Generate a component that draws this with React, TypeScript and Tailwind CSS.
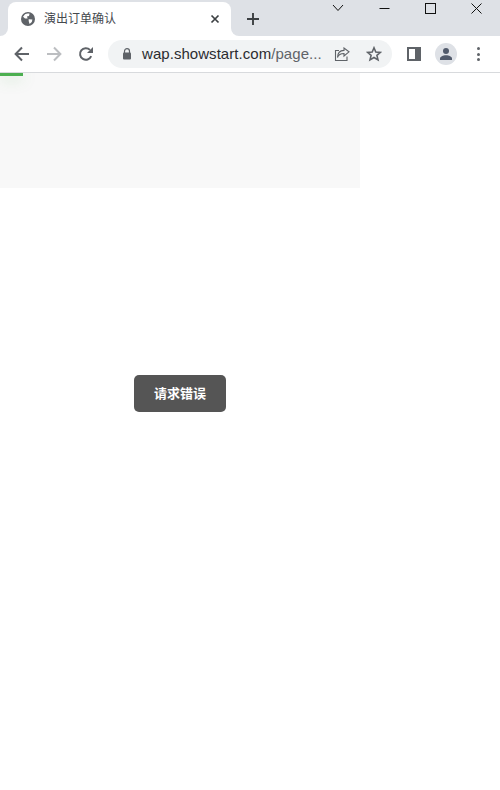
import React from 'react';

const ui = { fontFamily: '"Liberation Sans", "Noto Sans CJK SC", sans-serif' };

function WindowControls() {
  return (
    <div className="flex items-start ml-auto h-full pr-px">
      <button className="w-[46px] h-4 flex items-center justify-center">
        <svg width="12" height="8" viewBox="0 0 12 8" fill="none" stroke="#111111" strokeWidth="1">
          <path d="M1 1 L6 6.5 L11 1" />
        </svg>
      </button>
      <button className="w-[46px] h-4 flex items-center justify-center">
        <svg width="11" height="11" viewBox="0 0 11 11" fill="none" stroke="#111111" strokeWidth="1">
          <path d="M0.5 5.5 H10.5" />
        </svg>
      </button>
      <button className="w-[46px] h-4 flex items-center justify-center">
        <svg width="11" height="11" viewBox="0 0 11 11" fill="none" stroke="#111111" strokeWidth="1">
          <rect x="0.5" y="0.5" width="10" height="10" />
        </svg>
      </button>
      <button className="w-[46px] h-4 flex items-center justify-center">
        <svg width="11" height="11" viewBox="0 0 11 11" fill="none" stroke="#111111" strokeWidth="1">
          <path d="M0.5 0.5 L10.5 10.5 M10.5 0.5 L0.5 10.5" />
        </svg>
      </button>
    </div>
  );
}

function Tab() {
  return (
    <div className="relative w-[223px] h-[34px] ml-2 bg-white rounded-t-lg flex items-center pl-[13px] pr-[11px]">
      {/* curved feet of the tab */}
      <span className="absolute left-[-8px] bottom-0 w-2 h-2 bg-white"><span className="block w-2 h-2 bg-[#dee1e6] rounded-br-lg" /></span>
      <span className="absolute right-[-8px] bottom-0 w-2 h-2 bg-white"><span className="block w-2 h-2 bg-[#dee1e6] rounded-bl-lg" /></span>
      <svg width="14" height="14" viewBox="0 0 14 14" className="shrink-0">
        <circle cx="7" cy="7" r="7" fill="#5f6368" />
        <path d="M4 2.2 C5.5 1.2 7.5 1.2 8.6 1.8 L8 4 L6 4.6 L6.6 6.4 L4 6.6 L2 4.8 Z M7.6 7.2 L11.4 7.4 L10.8 10 L8.6 12 L7.8 9.6 Z" fill="#ffffff" />
      </svg>
      <span className="ml-[9px] text-[12px] text-[#45494e]">演出订单确认</span>
      <svg width="10" height="10" viewBox="0 0 10 10" className="ml-auto" fill="none" stroke="#3c4043" strokeWidth="1.7">
        <path d="M1.5 1.5 L8.5 8.5 M8.5 1.5 L1.5 8.5" />
      </svg>
    </div>
  );
}

function Toolbar() {
  return (
    <div className="h-[37px] bg-white border-b border-[#d8dadd] flex items-center pl-[14px]">
      <svg width="16" height="16" viewBox="0 0 16 16" fill="none" stroke="#5f6368" strokeWidth="2">
        <path d="M15 8 H2 M8 1.5 L1.6 8 L8 14.5" />
      </svg>
      <svg width="16" height="16" viewBox="0 0 16 16" fill="none" stroke="#bcbec1" strokeWidth="2" className="ml-4">
        <path d="M1 8 H14 M8 1.5 L14.4 8 L8 14.5" />
      </svg>
      <svg width="16" height="16" viewBox="0 0 16 16" fill="none" className="ml-4">
        <path d="M13.2 10.2 A5.8 5.8 0 1 1 12 3.9" stroke="#5f6368" strokeWidth="2" />
        <path d="M9 7 H15 V1 Z" fill="#5f6368" />
      </svg>
      <div className="ml-[14px] w-[284px] h-[28px] rounded-full bg-[#f1f3f4] flex items-center pl-[14px] pr-[10px]">
        <svg width="10" height="12" viewBox="0 0 10 12" className="shrink-0">
          <path d="M2.5 5 V3.2 A2.5 2.5 0 0 1 7.5 3.2 V5" fill="none" stroke="#5f6368" strokeWidth="1.2" />
          <rect x="1" y="4.6" width="8" height="7" rx="1" fill="#5f6368" />
        </svg>
        <span className="ml-[10px] text-[15px] tracking-[0.05px] whitespace-nowrap">
          <span className="text-[#2b2c30]">wap.showstart.com</span>
          <span className="text-[#5f6368]">/page...</span>
        </span>
        <svg width="16" height="15" viewBox="0 0 16 15" fill="none" stroke="#5f6368" strokeWidth="1.1" className="ml-auto shrink-0">
          <path d="M5 3.5 H1.5 V13.5 H13 V9.5 M3.5 10.5 C4.5 7.5 7 6.5 10 6.5 V9 L15 4.8 L10 1 V3.4 C6 3.6 3.6 6.5 3.5 10.5 Z" />
        </svg>
        <svg width="16" height="16" viewBox="0 0 16 16" fill="none" stroke="#5f6368" strokeWidth="1.6" className="ml-4 shrink-0">
          <path d="M8 1.8 L9.8 6 L14.4 6.4 L10.9 9.4 L12 13.9 L8 11.5 L4 13.9 L5.1 9.4 L1.6 6.4 L6.2 6 Z" />
        </svg>
      </div>
      <svg width="14" height="14" viewBox="0 0 14 14" className="ml-[15px] shrink-0">
        <rect x="0" y="0" width="14" height="14" fill="#5f6368" />
        <rect x="2" y="2" width="6" height="10" fill="#ffffff" />
      </svg>
      <div className="ml-[14px] w-[22px] h-[22px] rounded-full bg-[#dee1e6] flex items-center justify-center shrink-0">
        <svg width="14" height="14" viewBox="0 0 14 14" fill="#515a6b">
          <circle cx="7" cy="4" r="3" />
          <path d="M1 13 V11.5 C1 9.5 4 8.2 7 8.2 C10 8.2 13 9.5 13 11.5 V13 Z" />
        </svg>
      </div>
      <div className="ml-5 flex flex-col gap-[2.5px] shrink-0">
        <span className="w-[3px] h-[3px] rounded-full bg-[#5f6368]" />
        <span className="w-[3px] h-[3px] rounded-full bg-[#5f6368]" />
        <span className="w-[3px] h-[3px] rounded-full bg-[#5f6368]" />
      </div>
    </div>
  );
}

export default function App() {
  return (
    <div className="relative w-[500px] h-[790px] bg-white overflow-hidden" style={ui}>
      {/* browser chrome */}
      <div className="h-[36px] bg-[#dee1e6] flex items-end">
        <Tab />
        <svg width="12" height="12" viewBox="0 0 12 12" className="ml-4 mb-[11px] shrink-0" stroke="#3c4043" strokeWidth="1.9">
          <path d="M6 0 V12 M0 6 H12" />
        </svg>
        <div className="flex-1 self-start h-full flex justify-end">
          <WindowControls />
        </div>
      </div>
      <Toolbar />

      {/* page */}
      <div className="w-[360px] h-[115px] bg-[#f8f8f8] overflow-hidden">
        <div className="w-[23px] h-[3px] bg-[#4caf50] shadow-[0_3px_14px_#4caf5059]" />
      </div>

      {/* toast */}
      <div className="absolute left-[134px] top-[375px] w-[92px] h-[37px] rounded-[5px] bg-[#555555] flex items-center justify-center text-[13px] font-semibold text-white">
        请求错误
      </div>
    </div>
  );
}
